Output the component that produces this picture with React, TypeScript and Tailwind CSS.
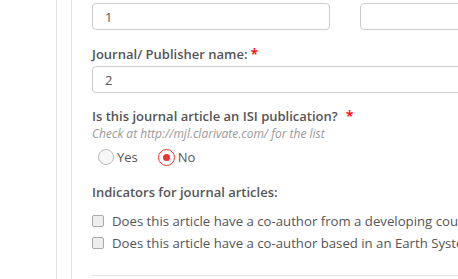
export default function App() {
  return (
    <div
      className="flex h-[279px] w-[458px] overflow-hidden bg-white text-[#555]"
      style={{ fontFamily: '"Open Sans", sans-serif' }}
    >
      <div className="w-[56px] shrink-0" />
      <div className="w-[15px] shrink-0 border-l border-[#e3e3e3]" />
      <div className="flex-1 border-l border-[#e3e3e3] pl-[20px]">
        <div className="flex gap-[30px] pt-[3px]">
          <input
            readOnly
            value="1"
            className="h-[27px] w-[238px] shrink-0 rounded-[4px] border border-[#ccc] px-[12px] text-[13px] text-[#555] outline-none"
          />
          <input
            readOnly
            value=""
            className="h-[27px] w-[238px] shrink-0 rounded-[4px] border border-[#ccc] px-[12px] text-[13px] outline-none"
          />
        </div>
        <div className="mt-[15px] text-[13px] font-semibold leading-[18px]">
          Journal/ Publisher name:<span className="ml-[3px] align-top text-[14px] text-[#f00]">*</span>
        </div>
        <input
          readOnly
          value="2"
          className="mt-[3px] h-[27px] w-[400px] rounded-[4px] border border-[#ccc] px-[12px] text-[13px] text-[#555] outline-none"
        />
        <div className="mt-[14px] text-[13px] font-semibold leading-[18px]">
          Is this journal article an ISI publication?<span className="ml-[8px] align-top text-[14px] text-[#f00]">*</span>
        </div>
        <div className="text-[12px] italic leading-[17px] text-[#999]">
          Check at http://mjl.clarivate.com/ for the list
        </div>
        <div className="mt-[6px] flex items-center pl-[6px] text-[13px] leading-[18px]">
          <span className="h-[16px] w-[16px] rounded-full border border-[#bbb] bg-[#f7f7f7]" />
          <span className="ml-[3px]">Yes</span>
          <span className="ml-[20px] flex h-[17px] w-[17px] items-center justify-center rounded-full border-[1.5px] border-[#e33]">
            <span className="h-[7px] w-[7px] rounded-full bg-[#e33]" />
          </span>
          <span className="ml-[3px]">No</span>
        </div>
        <div className="mt-[17px] text-[13px] font-semibold leading-[18px]">
          Indicators for journal articles:
        </div>
        <div className="mt-[11px] flex flex-col gap-[4px] text-[13.2px] leading-[18px]">
          <div className="flex items-center whitespace-nowrap">
            <span className="h-[12px] w-[12px] shrink-0 rounded-[2px] border border-[#aaa] bg-[#eee]" />
            <span className="ml-[8px]">Does this article have a co-author from a developing country?</span>
          </div>
          <div className="flex items-center whitespace-nowrap">
            <span className="h-[12px] w-[12px] shrink-0 rounded-[2px] border border-[#aaa] bg-[#eee]" />
            <span className="ml-[8px]">Does this article have a co-author based in an Earth System Science institution?</span>
          </div>
        </div>
        <div className="mt-[23px] border-t border-[#e5e5e5]" />
      </div>
    </div>
  );
}
